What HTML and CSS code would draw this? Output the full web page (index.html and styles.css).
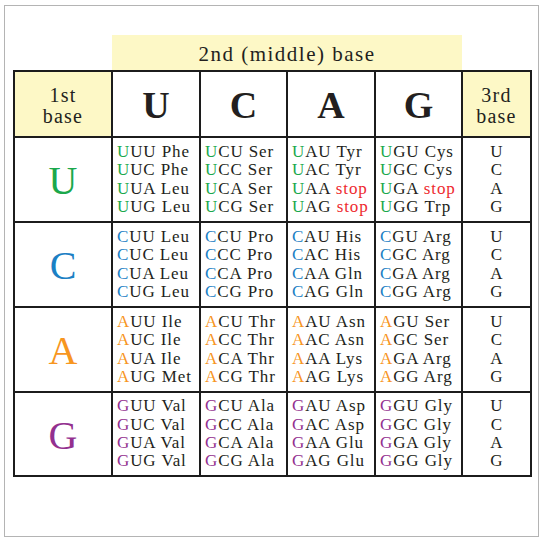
FILE: index.html
```html
<!DOCTYPE html>
<html lang="en">
<head>
    <meta charset="UTF-8">
    <meta name="viewport" content="width=device-width, initial-scale=1.0">
    <title>Genetic Code Table</title>
    <link rel="stylesheet" href="styles.css">
</head>
<body>
    <div class="frame">
        <div class="chart">
            <div class="second-label">2nd (middle) base</div>

            <div class="code-grid">
                <!-- header row -->
                <div class="cell head base-label"><div>1st<br>base</div></div>
                <div class="cell head letter">U</div>
                <div class="cell head letter">C</div>
                <div class="cell head letter">A</div>
                <div class="cell head letter">G</div>
                <div class="cell head base-label"><div>3rd<br>base</div></div>

                <!-- U row -->
                <div class="cell first u">U</div>
                <div class="cell codons"><div>
                    <span class="u">U</span>UU Phe<br>
                    <span class="u">U</span>UC Phe<br>
                    <span class="u">U</span>UA Leu<br>
                    <span class="u">U</span>UG Leu
                </div></div>
                <div class="cell codons"><div>
                    <span class="u">U</span>CU Ser<br>
                    <span class="u">U</span>CC Ser<br>
                    <span class="u">U</span>CA Ser<br>
                    <span class="u">U</span>CG Ser
                </div></div>
                <div class="cell codons"><div>
                    <span class="u">U</span>AU Tyr<br>
                    <span class="u">U</span>AC Tyr<br>
                    <span class="u">U</span>AA <span class="stop">stop</span><br>
                    <span class="u">U</span>AG <span class="stop">stop</span>
                </div></div>
                <div class="cell codons"><div>
                    <span class="u">U</span>GU Cys<br>
                    <span class="u">U</span>GC Cys<br>
                    <span class="u">U</span>GA <span class="stop">stop</span><br>
                    <span class="u">U</span>GG Trp
                </div></div>
                <div class="cell third"><div>U<br>C<br>A<br>G</div></div>

                <!-- C row -->
                <div class="cell first c">C</div>
                <div class="cell codons"><div>
                    <span class="c">C</span>UU Leu<br>
                    <span class="c">C</span>UC Leu<br>
                    <span class="c">C</span>UA Leu<br>
                    <span class="c">C</span>UG Leu
                </div></div>
                <div class="cell codons"><div>
                    <span class="c">C</span>CU Pro<br>
                    <span class="c">C</span>CC Pro<br>
                    <span class="c">C</span>CA Pro<br>
                    <span class="c">C</span>CG Pro
                </div></div>
                <div class="cell codons"><div>
                    <span class="c">C</span>AU His<br>
                    <span class="c">C</span>AC His<br>
                    <span class="c">C</span>AA Gln<br>
                    <span class="c">C</span>AG Gln
                </div></div>
                <div class="cell codons"><div>
                    <span class="c">C</span>GU Arg<br>
                    <span class="c">C</span>GC Arg<br>
                    <span class="c">C</span>GA Arg<br>
                    <span class="c">C</span>GG Arg
                </div></div>
                <div class="cell third"><div>U<br>C<br>A<br>G</div></div>

                <!-- A row -->
                <div class="cell first a">A</div>
                <div class="cell codons"><div>
                    <span class="a">A</span>UU Ile<br>
                    <span class="a">A</span>UC Ile<br>
                    <span class="a">A</span>UA Ile<br>
                    <span class="a">A</span>UG Met
                </div></div>
                <div class="cell codons"><div>
                    <span class="a">A</span>CU Thr<br>
                    <span class="a">A</span>CC Thr<br>
                    <span class="a">A</span>CA Thr<br>
                    <span class="a">A</span>CG Thr
                </div></div>
                <div class="cell codons"><div>
                    <span class="a">A</span>AU Asn<br>
                    <span class="a">A</span>AC Asn<br>
                    <span class="a">A</span>AA Lys<br>
                    <span class="a">A</span>AG Lys
                </div></div>
                <div class="cell codons"><div>
                    <span class="a">A</span>GU Ser<br>
                    <span class="a">A</span>GC Ser<br>
                    <span class="a">A</span>GA Arg<br>
                    <span class="a">A</span>GG Arg
                </div></div>
                <div class="cell third"><div>U<br>C<br>A<br>G</div></div>

                <!-- G row -->
                <div class="cell first g">G</div>
                <div class="cell codons"><div>
                    <span class="g">G</span>UU Val<br>
                    <span class="g">G</span>UC Val<br>
                    <span class="g">G</span>UA Val<br>
                    <span class="g">G</span>UG Val
                </div></div>
                <div class="cell codons"><div>
                    <span class="g">G</span>CU Ala<br>
                    <span class="g">G</span>CC Ala<br>
                    <span class="g">G</span>CA Ala<br>
                    <span class="g">G</span>CG Ala
                </div></div>
                <div class="cell codons"><div>
                    <span class="g">G</span>AU Asp<br>
                    <span class="g">G</span>AC Asp<br>
                    <span class="g">G</span>AA Glu<br>
                    <span class="g">G</span>AG Glu
                </div></div>
                <div class="cell codons"><div>
                    <span class="g">G</span>GU Gly<br>
                    <span class="g">G</span>GC Gly<br>
                    <span class="g">G</span>GA Gly<br>
                    <span class="g">G</span>GG Gly
                </div></div>
                <div class="cell third"><div>U<br>C<br>A<br>G</div></div>
            </div>
        </div>
    </div>
</body>
</html>
```

FILE: styles.css
```css
* {
    margin: 0;
    padding: 0;
    box-sizing: border-box;
}

body {
    font-family: 'Liberation Serif', 'Times New Roman', serif;
    color: #231f20;
    background: white;
}

.frame {
    margin: 5px 0 0 4px;
    width: 535px;
    height: 532px;
    border: 1px solid #b4b4b4;
    padding: 29px 0 0 8px;
}

.second-label {
    margin-left: 99px;
    width: 350px;
    height: 35px;
    padding-top: 3px;
    background: #fdf8c6;
    text-align: center;
    font-size: 21px;
    line-height: 32px;
    letter-spacing: 1.5px;
}

.code-grid {
    display: grid;
    grid-template-columns: 96px 86px 85px 86px 85px 67px;
    grid-template-rows: 64px 83px 83px 83px 82px;
    gap: 2px;
    padding: 2px;
    width: 519px;
    background: #1c1c1c;
}

.cell {
    background: white;
    display: flex;
    align-items: center;
}

.head {
    justify-content: center;
    text-align: center;
}

.base-label {
    background: #fdf8c6;
    font-size: 20px;
    line-height: 21px;
    letter-spacing: 1.2px;
    padding-top: 3px;
}

.letter {
    font-size: 38px;
    font-weight: 700;
    padding-top: 2px;
}

.first {
    justify-content: center;
    font-size: 40px;
    padding-top: 2px;
}

.codons {
    padding-left: 4px;
    font-size: 17px;
    line-height: 18.3px;
    letter-spacing: 0.9px;
    white-space: nowrap;
}

.third {
    justify-content: center;
    text-align: center;
    font-size: 17px;
    line-height: 18.3px;
}

.u { color: #1ba84c; }
.c { color: #1b80c4; }
.a { color: #f7961f; }
.g { color: #93308f; }

.stop {
    color: #ee2a2f;
}
```
